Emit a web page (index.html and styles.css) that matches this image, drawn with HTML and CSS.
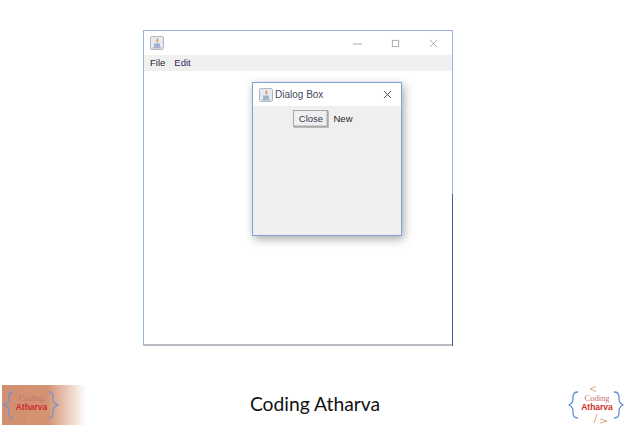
FILE: index.html
```html
<!DOCTYPE html>
<html lang="en">
<head>
<meta charset="utf-8">
<title>Coding Atharva</title>
<link rel="stylesheet" href="styles.css">
</head>
<body>
<svg class="defs" width="0" height="0" aria-hidden="true">
  <symbol id="java" viewBox="0 0 14 14">
    <rect x="0.5" y="0.5" width="13" height="13" rx="1.5" fill="#e6eaf0" stroke="#b0b8c4"/>
    <path d="M7.500 2c1.500 1.800.8 3-.2 4.800C5.800 5.500 6.300 3.800 7.500 2z" fill="#e8894c"/>
    <path d="M4 7.500h6v2a1.500 1.500 0 0 1-1.500 1.500h-3a1.500 1.500 0 0 1-1.500-1.500z" fill="#9fb0c8"/>
    <path d="M3 11.800h8" stroke="#8b9bb5" stroke-width="1"/>
  </symbol>
</svg>
<main class="stage">
  <section class="window">
    <header class="titlebar">
      <svg class="app-icon"><use href="#java"/></svg>
      <div class="controls">
        <svg class="ctl" viewBox="0 0 10 10"><path d="M0 5.500h10" /></svg>
        <svg class="ctl" viewBox="0 0 10 10"><rect x="1.500" y="1.500" width="7" height="7" /></svg>
        <svg class="ctl" viewBox="0 0 10 10"><path d="M1 1l8 8M9 1l-8 8" /></svg>
      </div>
    </header>
    <nav class="menubar"><span>File</span><span class="edit">Edit</span></nav>
    <section class="dialog">
      <header class="dialog-title">
        <svg class="app-icon"><use href="#java"/></svg>
        <span class="dialog-name">Dialog Box</span>
        <svg class="dialog-x" viewBox="0 0 10 10"><path d="M1 1l8 8M9 1l-8 8" /></svg>
      </header>
      <div class="dialog-body">
        <button class="btn" type="button">Close</button>
        <span class="new">New</span>
      </div>
    </section>
  </section>
</main>
<footer class="footer">
  <div class="logo-left">
    <svg class="logo-svg" viewBox="0 0 84 40">
      <path d="M11 7c-3 0-4 1-4 5s0 6-5 8c5 2 5 4 5 8s1 5 4 5M47 7c3 0 4 1 4 5s0 6 5 8c-5 2-5 4-5 8s-1 5-4 5" fill="none" stroke="#6f94d0" stroke-width="1.300"/>
      <path d="M29 2l-6 2.500 6 2.500M26 39l2-8M31 33l5 2-5 2" fill="none" stroke="#e09a68" stroke-width="1"/>
      <text x="29.500" y="15.500" class="logo-top">Coding</text>
      <text x="29.500" y="25" class="logo-main">Atharva</text>
    </svg>
  </div>
  <div class="caption">Coding Atharva</div>
  <svg class="logo-right" viewBox="0 0 56 46">
    <path d="M10 10c-3 0-5 1-5 5s0 6-4 8c4 2 4 4 4 8s2 5 5 5M46 10c3 0 5 1 5 5s0 6 4 8c-4 2-4 4-4 8s-2 5-5 5" fill="none" stroke="#5b8fd0" stroke-width="1.300"/>
    <path d="M28 4.500l-6 2.500 6 2.500M26 41l3-9M32 37l7 2-7 2" fill="none" stroke="#e0a878" stroke-width="1"/>
    <text x="29" y="18.500" class="logo-top">Coding</text>
    <text x="29" y="27.500" class="logo-main">Atharva</text>
  </svg>
</footer>
</body>
</html>
```
FILE: styles.css
```css
html, body { margin: 0; padding: 0; }
body { width: 640px; height: 439px; overflow: hidden; background: #fff; font-family: "Liberation Sans", Arial, sans-serif; }
.defs { display: block; height: 0; }
.stage { height: 345px; padding: 30px 0 0 143px; box-sizing: border-box; }
.window {
  position: relative; width: 310px; height: 316px; box-sizing: border-box;
  background: #fff; border: 1px solid #94b2e4; border-bottom: 2px solid #b8bbc2;
}
.window::after { content: ""; position: absolute; right: -1px; top: 163px; bottom: -2px; width: 1px; background: #45609c; }
.titlebar { height: 24px; display: flex; align-items: center; justify-content: space-between; padding-left: 6px; }
.app-icon { width: 14px; height: 14px; display: block; }
.controls { display: flex; gap: 29px; padding-right: 14px; align-items: center; }
.ctl { width: 9px; height: 9px; fill: none; stroke: #a6a6a6; stroke-width: 1; display: block; }
.menubar {
  height: 16px; box-sizing: border-box; padding: 0 0 1px 6px; background: #f0f0f0; display: flex; gap: 9px;
  align-items: center; font-size: 9.500px; color: #1c1c30;
}
.edit { color: #402060; }
.dialog {
  position: absolute; left: 108px; top: 51px; width: 150px; height: 154px; box-sizing: border-box;
  background: #efefef; border: 1px solid #7ea3de; box-shadow: 2px 3px 9px rgba(0,0,0,.35);
}
.dialog-title { height: 23px; background: #fff; display: flex; align-items: center; padding: 0 9px 0 6px; }
.dialog-name { font-size: 10px; color: #444a60; margin-left: 2px; flex: 1; padding-bottom: 1px; }
.dialog-x { width: 9px; height: 9px; fill: none; stroke: #444; stroke-width: 1; }
.dialog-body { display: flex; justify-content: center; align-items: center; gap: 5px; padding-top: 4px; padding-right: 8px; }
.btn {
  width: 35px; height: 17px; padding: 0; box-sizing: border-box; font: 9.500px "Liberation Sans", Arial, sans-serif;
  color: #30384a; background: #f0f0f2; border: 1px solid #a8a8a8; box-shadow: inset -1px -1px 0 #d0d0d0, 1px 1px 0 #bbb;
}
.new { font-size: 9.500px; color: #2a2a20; }
.footer { display: flex; align-items: center; justify-content: space-between; height: 94px; box-sizing: border-box; padding-top: 25px; }
.logo-left { width: 84px; height: 40px; margin-left: 2px; background: linear-gradient(90deg, #cf8f70 0, #d49474 55%, #fff 100%); }
.logo-svg { width: 84px; height: 40px; display: block; }
.caption { font-family: Lato, sans-serif; font-size: 19.300px; color: #111; margin: -2px 0 0 -24px; }
.logo-right { width: 56px; height: 46px; margin-right: 16px; }
.logo-top { font: 8.500px "Liberation Serif", serif; fill: #c8706a; text-anchor: middle; }
.logo-main { font: bold 8.500px "Liberation Sans", sans-serif; fill: #d02c2c; text-anchor: middle; }
```
